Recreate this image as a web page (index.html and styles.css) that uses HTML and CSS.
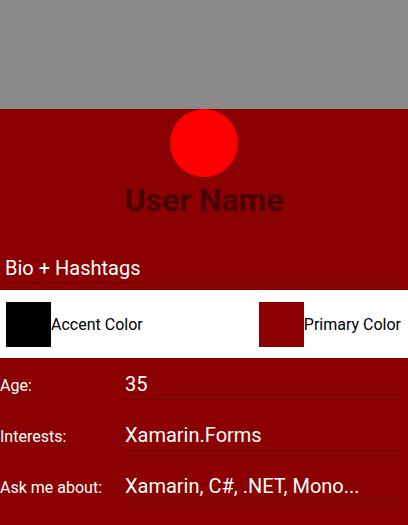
FILE: index.html
```html
<!DOCTYPE html>
<html>
<head>
<meta charset="utf-8">
<link rel="stylesheet" href="styles.css">
</head>
<body>
<div class="page">
  <div class="header"></div>
  <div class="content">
    <div class="avatar"></div>
    <div class="username">User Name</div>
    <div class="bio">Bio + Hashtags</div>
    <div class="colors">
      <div class="swatch-item">
        <div class="swatch accent"></div>
        <span class="swatch-label">Accent Color</span>
      </div>
      <div class="swatch-item">
        <div class="swatch primary"></div>
        <span class="swatch-label">Primary Color</span>
      </div>
    </div>
    <div class="fields">
      <div class="field">
        <span class="field-label">Age:</span>
        <span class="field-value">35</span>
      </div>
      <div class="field">
        <span class="field-label">Interests:</span>
        <span class="field-value">Xamarin.Forms</span>
      </div>
      <div class="field">
        <span class="field-label">Ask me about:</span>
        <span class="field-value">Xamarin, C#, .NET, Mono...</span>
      </div>
    </div>
  </div>
</div>
</body>
</html>
```
FILE: styles.css
```css
html, body {
  margin: 0;
  padding: 0;
  background: #8b0000;
  font-family: Roboto, "Liberation Sans", sans-serif;
}
.page {
  width: 408px;
  height: 525px;
  overflow: hidden;
}
.header {
  height: 109px;
  background: #8a8a8a;
}
.content {
  background: #8b0000;
  display: flex;
  flex-direction: column;
}
.avatar {
  width: 68px;
  height: 68px;
  border-radius: 50%;
  background: #ff0000;
  align-self: center;
  margin-left: -1px;
}
.username {
  text-align: center;
  font-weight: bold;
  font-size: 32px;
  line-height: 36px;
  color: #4a0000;
  margin-top: 5px;
}
.bio {
  margin: 36px 8px 0 5px;
  font-size: 20px;
  line-height: 28px;
  color: #fff;
  border-bottom: 1px solid #6a0000;
}
.colors {
  margin-top: 7px;
  background: #fff;
  height: 68px;
  display: flex;
  align-items: center;
  justify-content: space-between;
  padding: 0 7px 0 6px;
}
.swatch-item {
  display: flex;
  align-items: center;
}
.swatch {
  width: 45px;
  height: 45px;
}
.accent { background: #000; }
.primary { background: #8b0000; }
.swatch-label {
  font-size: 16px;
  color: #000;
}
.fields {
  display: flex;
  flex-direction: column;
  padding-top: 12px;
  gap: 21px;
}
.field {
  display: flex;
  align-items: center;
}
.field-label {
  width: 124px;
  font-size: 16px;
  color: #fff;
}
.field-value {
  flex: 1;
  margin-right: 7px;
  padding-left: 1px;
  font-size: 20px;
  line-height: 28px;
  color: #fff;
  padding-bottom: 1px;
  border-bottom: 1px solid #6a0000;
}
```
